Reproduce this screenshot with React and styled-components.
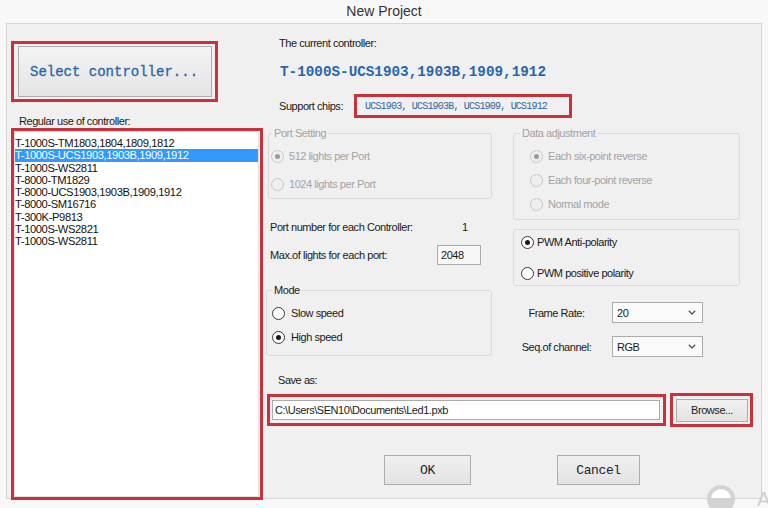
import React from "react";
import styled, { createGlobalStyle } from "styled-components";

const RED = "#c8323c";
const BLUE = "#2a66a8";
const SANS = `"Liberation Sans", Arial, sans-serif`;
const MONO = `"Liberation Mono", "Courier New", monospace`;

const Global = createGlobalStyle`
  html, body { margin: 0; padding: 0; background: #f8f8f8; }
  * { box-sizing: border-box; }
`;

const Page = styled.div`
  position: relative;
  width: 768px;
  height: 508px;
  overflow: hidden;
  background: #f8f8f8;
  font-family: ${SANS};
  font-size: 11px;
  letter-spacing: -0.45px;
  color: #1a1a1a;
`;

const TitleBar = styled.div`
  height: 23px;
  line-height: 22px;
  text-align: center;
  font-size: 14px;
  letter-spacing: 0;
  color: #333;
`;

const Dialog = styled.div`
  margin-left: 6px;
  width: 756px;
  height: 476px;
  border: 1px solid #d6d6d6;
  background: #f0f0f0;
  display: flex;
`;

const LeftCol = styled.div`
  width: 259px;
  padding-left: 4px;
  display: flex;
  flex-direction: column;
`;

const RedFrame = styled.div`
  border: 3px solid ${RED};
`;

const SelectFrame = styled(RedFrame)`
  margin-top: 17px;
  width: 207px;
  height: 61px;
  padding: 2px 3px 2px 4px;
`;

const BigButton = styled.div`
  width: 100%;
  height: 100%;
  border: 1px solid #adadad;
  background: linear-gradient(#f3f3f3, #e4e4e4);
  display: flex;
  align-items: center;
  padding-left: 11px;
  font-family: ${MONO};
  font-size: 14px;
  letter-spacing: 0;
  color: ${BLUE};
  -webkit-text-stroke: 0.3px ${BLUE};
`;

const Label = styled.div`
  line-height: 14px;
  height: 14px;
  white-space: nowrap;
  color: ${(p) => (p.$disabled ? "#a3a3a3" : "#1a1a1a")};
`;

const ListLabel = styled(Label)`
  margin: 12px 0 0 8px;
`;

const ListFrame = styled(RedFrame)`
  flex: 1;
  width: 252px;
  margin-bottom: -2px;
  padding: 0 1px 0 0;
`;

const ListBox = styled.div`
  height: 100%;
  background: #fff;
  border: 1px solid #e2e2e2;
  padding-top: 5px;
`;

const ListItem = styled.div`
  height: 12.25px;
  line-height: 12.25px;
  font-size: 11.2px;
  letter-spacing: -0.4px;
  white-space: nowrap;
  color: ${(p) => (p.$selected ? "#fff" : "#111")};
  background: ${(p) => (p.$selected ? "#3399ff" : "transparent")};
`;

const RightCol = styled.div`
  flex: 1;
  display: flex;
  flex-direction: column;
`;

const CurrentLabel = styled(Label)`
  margin: 12px 0 0 13px;
`;

const ControllerTitle = styled.div`
  margin: 13px 0 0 14px;
  line-height: 18px;
  height: 18px;
  font-family: ${MONO};
  font-size: 14.3px;
  font-weight: bold;
  letter-spacing: 0;
  color: ${BLUE};
  white-space: nowrap;
`;

const SupportRow = styled.div`
  display: flex;
  align-items: center;
  margin: 13px 0 0 13px;
  height: 24px;
`;

const SupportLabel = styled(Label)`
  width: 75px;
`;

const ChipBox = styled(RedFrame)`
  width: 218px;
  height: 24px;
  padding-left: 8px;
  display: flex;
  align-items: center;
  font-family: ${MONO};
  font-size: 10px;
  letter-spacing: -0.8px;
  color: ${BLUE};
  white-space: nowrap;
`;

const Middle = styled.div`
  display: flex;
  margin-top: 8px;
`;

const MidLeft = styled.div`
  width: 226px;
  display: flex;
  flex-direction: column;
`;

const MidRight = styled.div`
  width: 227px;
  margin-left: 21px;
  display: flex;
  flex-direction: column;
`;

const Group = styled.fieldset`
  margin: ${(p) => p.$mt || 0}px 0 0 ${(p) => p.$ml || 0}px;
  width: ${(p) => p.$w}px;
  min-width: 0;
  border: 1px solid #dadada;
  border-radius: 3px;
  padding: 0;
`;

const Legend = styled.legend`
  padding: 0 2px;
  margin-left: ${(p) => p.$ml}px;
  line-height: 14px;
  height: 14px;
  color: ${(p) => (p.$disabled ? "#a3a3a3" : "#1a1a1a")};
`;

const GroupBody = styled.div`
  padding: ${(p) => p.$pad};
`;

const RadioRow = styled.div`
  display: flex;
  align-items: center;
  height: ${(p) => p.$h}px;
  gap: ${(p) => p.$gap}px;
  color: ${(p) => (p.$disabled ? "#a3a3a3" : "#1a1a1a")};
  white-space: nowrap;
`;

const Circle = styled.span`
  width: 13px;
  height: 13px;
  flex: none;
  border-radius: 50%;
  border: 1px solid ${(p) => (p.$disabled ? "#c8c8c8" : "#3a3a3a")};
  background: ${(p) => (p.$disabled ? "#efefef" : "#fff")};
  display: flex;
  align-items: center;
  justify-content: center;
  &::after {
    content: "";
    width: 5px;
    height: 5px;
    border-radius: 50%;
    background: ${(p) => (p.$disabled ? "#9a9a9a" : "#1a1a1a")};
    display: ${(p) => (p.$checked ? "block" : "none")};
  }
`;

const Radio = ({ label, checked, disabled, h, gap = 5 }) => (
  <RadioRow $h={h} $gap={gap} $disabled={disabled}>
    <Circle $checked={checked} $disabled={disabled} />
    <span>{label}</span>
  </RadioRow>
);

const FieldRow = styled.div`
  display: flex;
  align-items: center;
  height: ${(p) => p.$h}px;
  margin: ${(p) => p.$mt}px 0 0 ${(p) => p.$ml}px;
`;

const FieldLabel = styled(Label)`
  width: ${(p) => p.$w}px;
  text-align: ${(p) => p.$align || "left"};
`;

const SmallInput = styled.div`
  width: 44px;
  height: 20px;
  border: 1px solid #a9a9a9;
  background: #f7f7f7;
  padding-left: 3px;
  line-height: 18px;
`;

const PwmBox = styled.div`
  margin-top: 9px;
  width: 227px;
  border: 1px solid #dadada;
  border-radius: 3px;
  padding-left: 7px;
  display: flex;
  flex-direction: column;
  gap: 7px;
`;

const SelectBox = styled.div`
  margin-left: 12px;
  width: 91px;
  height: 21px;
  border: 1px solid #acacac;
  background: #fafafa;
  display: flex;
  align-items: center;
  justify-content: space-between;
  padding: 0 6px 0 4px;
`;

const Chevron = () => (
  <svg width="8" height="5" viewBox="0 0 8 5">
    <path d="M0.8 0.8 L4 4 L7.2 0.8" fill="none" stroke="#555" strokeWidth="1.3" />
  </svg>
);

const SaveLabel = styled(Label)`
  margin: 16px 0 0 12px;
`;

const PathRow = styled.div`
  display: flex;
  align-items: center;
  margin: 6px 0 0 1px;
  height: 34px;
`;

const PathFrame = styled(RedFrame)`
  width: 399px;
  height: 32px;
  padding: 0 3px 0 2px;
  display: flex;
  align-items: center;
`;

const PathInput = styled.div`
  flex: 1;
  height: 20px;
  border: 1px solid #ababab;
  background: #fff;
  padding-left: 2px;
  line-height: 18px;
  white-space: nowrap;
`;

const BrowseFrame = styled(RedFrame)`
  margin-left: 4px;
  width: 83px;
  height: 34px;
  padding: 0 2px 0 3px;
  display: flex;
  align-items: center;
`;

const Button = styled.div`
  width: ${(p) => p.$w}px;
  height: ${(p) => p.$h}px;
  margin-left: ${(p) => p.$ml || 0}px;
  border: 1px solid #adadad;
  background: linear-gradient(#f0f0f0, #e3e3e3);
  display: flex;
  align-items: center;
  justify-content: center;
  color: #222;
  font-family: ${(p) => (p.$mono ? MONO : SANS)};
  font-size: ${(p) => (p.$mono ? "13px" : "11px")};
  letter-spacing: ${(p) => (p.$mono ? "-0.4px" : "-0.45px")};
`;

const ButtonRow = styled.div`
  display: flex;
  margin-top: 28px;
`;

const Watermark = styled.div`
  position: absolute;
  right: 0;
  bottom: 0;
  width: 80px;
  height: 24px;
  pointer-events: none;
`;

const WmCircle = styled.div`
  position: absolute;
  left: 19px;
  top: 1px;
  width: 28px;
  height: 28px;
  border-radius: 50%;
  border: 4px solid #d3d3d3;
  background: linear-gradient(#fff 45%, #d3d3d3 45%);
`;

const WmText = styled.div`
  position: absolute;
  left: 69px;
  top: 4px;
  font-size: 20px;
  letter-spacing: 0;
  color: #cfcfcf;
`;

const items = [
  "T-1000S-TM1803,1804,1809,1812",
  "T-1000S-UCS1903,1903B,1909,1912",
  "T-1000S-WS2811",
  "T-8000-TM1829",
  "T-8000-UCS1903,1903B,1909,1912",
  "T-8000-SM16716",
  "T-300K-P9813",
  "T-1000S-WS2821",
  "T-1000S-WS2811",
];

export default function App() {
  return (
    <Page>
      <Global />
      <TitleBar>New Project</TitleBar>
      <Dialog>
        <LeftCol>
          <SelectFrame>
            <BigButton>Select controller...</BigButton>
          </SelectFrame>
          <ListLabel>Regular use of controller:</ListLabel>
          <ListFrame>
            <ListBox>
              {items.map((t, i) => (
                <ListItem key={i} $selected={i === 1}>
                  {t}
                </ListItem>
              ))}
            </ListBox>
          </ListFrame>
        </LeftCol>
        <RightCol>
          <CurrentLabel>The current controller:</CurrentLabel>
          <ControllerTitle>T-1000S-UCS1903,1903B,1909,1912</ControllerTitle>
          <SupportRow>
            <SupportLabel>Support chips:</SupportLabel>
            <ChipBox>UCS1903, UCS1903B, UCS1909, UCS1912</ChipBox>
          </SupportRow>
          <Middle>
            <MidLeft>
              <Group $ml={2} $w={224}>
                <Legend $ml={3} $disabled>Port Setting</Legend>
                <GroupBody $pad="2px 0 0 2px">
                  <Radio h={28} label="512 lights per Port" checked disabled />
                  <Radio h={28} label="1024 lights per Port" disabled />
                </GroupBody>
              </Group>
              <FieldRow $h={14} $mt={21} $ml={4}>
                <FieldLabel $w={192}>Port number for each Controller:</FieldLabel>
                <span>1</span>
              </FieldRow>
              <FieldRow $h={22} $mt={10} $ml={4}>
                <FieldLabel $w={167}>Max.of lights for each port:</FieldLabel>
                <SmallInput>2048</SmallInput>
              </FieldRow>
              <Group $w={226} $mt={17}>
                <Legend $ml={5}>Mode</Legend>
                <GroupBody $pad="4px 0 6px 5px">
                  <Radio h={24} gap={6} label="Slow speed" />
                  <Radio h={24} gap={6} label="High speed" checked />
                </GroupBody>
              </Group>
            </MidLeft>
            <MidRight>
              <Group $w={227}>
                <Legend $ml={6} $disabled>Data adjustment</Legend>
                <GroupBody $pad="4px 0 3px 16px">
                  <Radio h={24} label="Each six-point reverse" checked disabled />
                  <Radio h={24} label="Each four-point reverse" disabled />
                  <Radio h={24} label="Normal mode" disabled />
                </GroupBody>
              </Group>
              <PwmBox>
                <Radio h={24} gap={3} label="PWM Anti-polarity" checked />
                <Radio h={24} gap={3} label="PWM positive polarity" />
              </PwmBox>
              <FieldRow $h={21} $mt={16} $ml={0}>
                <FieldLabel $w={87} $align="center">Frame Rate:</FieldLabel>
                <SelectBox>
                  <span>20</span>
                  <Chevron />
                </SelectBox>
              </FieldRow>
              <FieldRow $h={21} $mt={13} $ml={0}>
                <FieldLabel $w={87} $align="center">Seq.of channel:</FieldLabel>
                <SelectBox>
                  <span>RGB</span>
                  <Chevron />
                </SelectBox>
              </FieldRow>
            </MidRight>
          </Middle>
          <SaveLabel>Save as:</SaveLabel>
          <PathRow>
            <PathFrame>
              <PathInput>C:\Users\SEN10\Documents\Led1.pxb</PathInput>
            </PathFrame>
            <BrowseFrame>
              <Button $w={72} $h={23}>Browse...</Button>
            </BrowseFrame>
          </PathRow>
          <ButtonRow>
            <Button $w={87} $h={30} $ml={118} $mono>OK</Button>
            <Button $w={83} $h={30} $ml={86} $mono>Cancel</Button>
          </ButtonRow>
        </RightCol>
      </Dialog>
      <Watermark>
        <WmCircle />
        <WmText>A</WmText>
      </Watermark>
    </Page>
  );
}
